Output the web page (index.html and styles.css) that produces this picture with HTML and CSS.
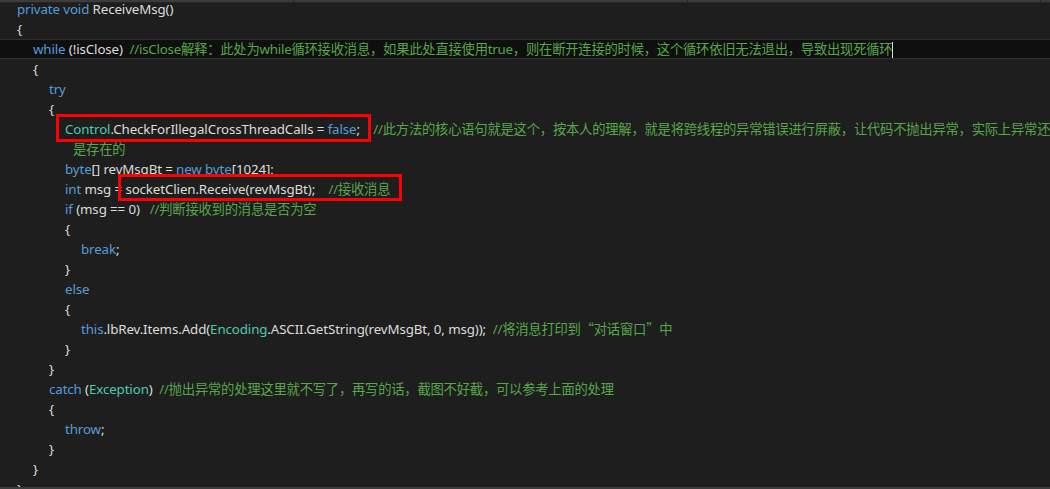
FILE: index.html
```html
<!DOCTYPE html>
<html lang="zh-CN">
<head>
<meta charset="utf-8">
<title>ReceiveMsg</title>
<link rel="stylesheet" href="styles.css">
</head>
<body>
<div class="editor">
  <div class="topbar">
    <div class="seg s1"></div>
    <div class="seg s2"></div>
    <div class="seg s3"></div>
    <div class="seg s4"></div>
  </div>
  <div class="code">
    <div class="ln i0"><span class="k">private</span> <span class="k">void</span> ReceiveMsg()</div>
    <div class="ln i0">{</div>
    <div class="ln i1 cur"><span class="k">while</span> (!isClose)  <span class="c">//isClose解释：此处为while循环接收消息，如果此处直接使用true，则在断开连接的时候，这个循环依旧无法退出，导致出现死循环</span><span class="caret"></span></div>
    <div class="ln i1">{</div>
    <div class="ln i2"><span class="k">try</span></div>
    <div class="ln i2">{</div>
    <div class="ln i3"><span class="mark m1"><span class="t">Control</span>.CheckForIllegalCrossThreadCalls = <span class="k">false</span>;</span>    <span class="c">//此方法的核心语句就是这个，按本人的理解，就是将跨线程的异常错误进行屏蔽，让代码不抛出异常，实际上异常还</span></div>
    <div class="ln i3 wrap"><span class="c">是存在的</span></div>
    <div class="ln i3"><span class="k">byte</span>[] revMsgBt = <span class="k">new</span> <span class="k">byte</span>[1024];</div>
    <div class="ln i3"><span class="k">int</span> msg = <span class="mark m2">socketClien.Receive(revMsgBt);    <span class="c">//接收消息</span></span></div>
    <div class="ln i3"><span class="k">if</span> (msg == 0)   <span class="c">//判断接收到的消息是否为空</span></div>
    <div class="ln i3">{</div>
    <div class="ln i4"><span class="k">break</span>;</div>
    <div class="ln i3">}</div>
    <div class="ln i3"><span class="k">else</span></div>
    <div class="ln i3">{</div>
    <div class="ln i4"><span class="k">this</span>.lbRev.Items.Add(<span class="t">Encoding</span>.ASCII.GetString(revMsgBt, 0, msg));  <span class="c">//将消息打印到<span class="q">“</span>对话窗口<span class="q">”</span>中</span></div>
    <div class="ln i3">}</div>
    <div class="ln i2">}</div>
    <div class="ln i2"><span class="k">catch</span> (<span class="t">Exception</span>)  <span class="c">//抛出异常的处理这里就不写了，再写的话，截图不好截，可以参考上面的处理</span></div>
    <div class="ln i2">{</div>
    <div class="ln i3"><span class="k">throw</span>;</div>
    <div class="ln i2">}</div>
    <div class="ln i1">}</div>
    <div class="ln i0">}</div>
  </div>
  <div class="bottombar"></div>
</div>
</body>
</html>
```
FILE: styles.css
```css
html, body {
  margin: 0;
  padding: 0;
  background: #1e1e1e;
}
.editor {
  position: relative;
  width: 1050px;
  height: 489px;
  overflow: hidden;
  background: #1e1e1e;
  font-family: "Noto Sans", "Noto Sans CJK SC", sans-serif;
  font-size: 13.33px;
  color: #dcdcdc;
}
.topbar {
  display: flex;
  height: 3px;
  gap: 1px;
  background: #252526;
}
.seg {
  background: #3c3c3c;
  height: 2px;
}
.s1 { width: 293px; }
.s2 { width: 393px; }
.s3 { width: 352px; }
.s4 { flex: 1; }
.code {
  margin-top: -4px;
}
.ln {
  height: 20px;
  line-height: 20px;
  white-space: pre;
  padding-left: 17px;
  position: relative;
  letter-spacing: -0.12px;
}
.i1 { padding-left: 33px; }
.i2 { padding-left: 49px; }
.i3 { padding-left: 65px; }
.i4 { padding-left: 81px; }
.i3.wrap { padding-left: 73px; }
.cur {
  background: #0f0f0f;
  box-shadow: inset 0 1px 0 #303030, inset 0 -1px 0 #303030;
}
.k { color: #569cd6; }
.t { color: #4ec9b0; }
.c { color: #57a64a; letter-spacing: -0.24px; }
.q { font-family: "Noto Sans CJK SC", sans-serif; }
.caret {
  display: inline-block;
  width: 1px;
  height: 16px;
  background: #dcdcdc;
  vertical-align: middle;
}
.mark {
  position: relative;
}
.mark::after {
  content: "";
  position: absolute;
  border: 3px solid #ff0000;
  pointer-events: none;
}
.m1::after { left: -9px; right: -11px; top: -6px; bottom: -4px; }
.m2::after { left: -7px; right: -12px; top: -6px; bottom: -3px; }
.bottombar {
  position: absolute;
  left: 0;
  right: 0;
  bottom: 0;
  height: 2px;
  background: #3c3c3c;
}
```
